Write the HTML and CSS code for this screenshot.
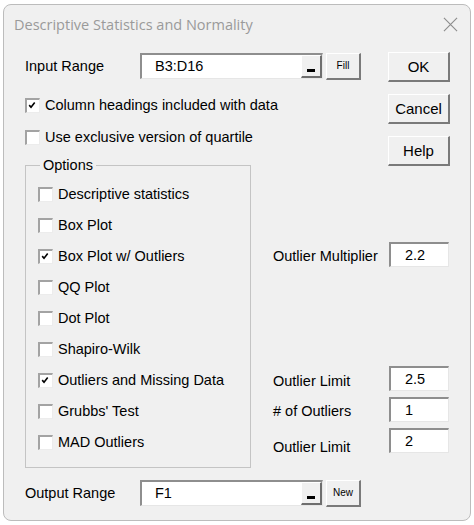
FILE: index.html
```html
<!DOCTYPE html>
<html>
<head>
<meta charset="utf-8">
<link rel="stylesheet" href="styles.css">
</head>
<body>
<div class="dialog">
  <div class="titlebar">
    <span class="title">Descriptive Statistics and Normality</span>
    <svg class="close" width="16" height="16" viewBox="0 0 16 16"><path d="M1 1 L15 15 M15 1 L1 15" stroke="#8c8c8c" stroke-width="1.2" fill="none"/></svg>
  </div>
  <div class="content">
    <div class="top">
      <div class="top-left">
        <div class="range-row">
          <span class="label">Input Range</span>
          <div class="refedit"><span class="val">B3:D16</span><span class="mini"><i></i></span></div>
          <button class="small-btn">Fill</button>
        </div>
        <label class="check top-check"><span class="box"><svg viewBox="0 0 15 15"><path d="M3 7 L5.5 10 L10.5 3.5" stroke="#000" stroke-width="2.2" fill="none"/></svg></span>Column headings included with data</label>
        <label class="check top-check"><span class="box"></span>Use exclusive version of quartile</label>
      </div>
      <div class="btns">
        <button class="btn">OK</button>
        <button class="btn">Cancel</button>
        <button class="btn">Help</button>
      </div>
    </div>
    <div class="lower">
      <fieldset class="group">
        <legend>Options</legend>
        <div class="opts">
          <label class="check"><span class="box"></span>Descriptive statistics</label>
          <label class="check"><span class="box"></span>Box Plot</label>
          <label class="check"><span class="box"><svg viewBox="0 0 15 15"><path d="M3 7 L5.5 10 L10.5 3.5" stroke="#000" stroke-width="2.2" fill="none"/></svg></span>Box Plot w/ Outliers</label>
          <label class="check"><span class="box"></span>QQ Plot</label>
          <label class="check"><span class="box"></span>Dot Plot</label>
          <label class="check"><span class="box"></span>Shapiro-Wilk</label>
          <label class="check"><span class="box"><svg viewBox="0 0 15 15"><path d="M3 7 L5.5 10 L10.5 3.5" stroke="#000" stroke-width="2.2" fill="none"/></svg></span>Outliers and Missing Data</label>
          <label class="check"><span class="box"></span>Grubbs' Test</label>
          <label class="check"><span class="box"></span>MAD Outliers</label>
        </div>
      </fieldset>
      <div class="fields">
        <div class="field r3"><span class="flabel">Outlier Multiplier</span><span class="num">2.2</span></div>
        <div class="field r7"><span class="flabel low">Outlier Limit</span><span class="num">2.5</span></div>
        <div class="field r8"><span class="flabel">#&nbsp;of Outliers</span><span class="num">1</span></div>
        <div class="field r9"><span class="flabel lower-l">Outlier Limit</span><span class="num">2</span></div>
      </div>
    </div>
    <div class="range-row out-row">
      <span class="label">Output Range</span>
      <div class="refedit"><span class="val">F1</span><span class="mini"><i></i></span></div>
      <button class="small-btn">New</button>
    </div>
  </div>
</div>
</body>
</html>
```
FILE: styles.css
```css
* { box-sizing: border-box; }
html, body { margin: 0; padding: 0; background: #ffffff; }
body {
  font-family: "Liberation Sans", Arial, sans-serif;
  font-size: 14.5px;
  color: #000;
}
.dialog {
  margin: 4px 3px 0 3px;
  width: 468px;
  height: 517px;
  border: 1px solid #bcbcbc;
  border-radius: 8px;
  background: #f0f0f0;
  overflow: hidden;
}
.titlebar {
  height: 38px;
  display: flex;
  align-items: center;
  justify-content: space-between;
  padding: 0 12px 0 10px;
}
.title {
  font-family: "Open Sans", "Noto Sans", sans-serif;
  font-size: 14.5px;
  color: #9a9a9a;
}
.close { width: 15px; height: 15px; }
.content { padding: 10px 0 0 21px; }
.top { display: flex; height: 103px; }
.top-left { width: 363px; }
.range-row { display: flex; align-items: center; height: 26px; }
.label { width: 115px; }
.refedit {
  width: 183px;
  height: 26px;
  display: flex;
  align-items: stretch;
  background: #fff;
  border-style: solid;
  border-width: 2px 1px 1px 2px;
  border-color: #8e8e8e #e6e6e6 #e6e6e6 #8e8e8e;
}
.val { flex: 1; padding-left: 13px; line-height: 22px; }
.mini {
  width: 21px;
  background: #f0f0f0;
  border-style: solid;
  border-width: 1px 2px 2px 1px;
  border-color: #fff #6e6e6e #6e6e6e #fff;
  display: flex;
  align-items: flex-end;
  justify-content: center;
  padding-bottom: 4px;
}
.mini i { display: block; width: 8px; height: 3px; background: #000; }
.small-btn {
  margin-left: 3px;
  width: 35px;
  height: 27px;
  padding: 0;
  background: #f0f0f0;
  border-style: solid;
  border-width: 1px 2px 2px 1px;
  border-color: #fff #7a7a7a #7a7a7a #fff;
  font-family: "Liberation Sans", Arial, sans-serif;
  font-size: 10px;
  color: #000;
}
.check { display: flex; align-items: center; height: 20px; }
.top-check { margin-top: 12px; }
.range-row + .top-check { margin-top: 16px; }
.box {
  width: 15px;
  height: 15px;
  margin-right: 5px;
  background: #fff;
  border-style: solid;
  border-width: 2px 1px 1px 2px;
  border-color: #a3a3a3 #ececec #ececec #a3a3a3;
  display: flex;
}
.box svg { width: 11px; height: 11px; }
.btns { display: flex; flex-direction: column; gap: 12px; margin-top: -1px; align-self: flex-start; }
.btn {
  width: 62px;
  height: 30px;
  padding: 0;
  background: #f0f0f0;
  border-style: solid;
  border-width: 1px 2px 2px 1px;
  border-color: #fff #7a7a7a #7a7a7a #fff;
  font-family: "Liberation Sans", Arial, sans-serif;
  font-size: 15px;
  color: #000;
}
.lower { display: flex; }
.group {
  margin: 0;
  padding: 0;
  width: 226px;
  border: 1px solid #c4c4c4;
  min-width: 0;
}
.group legend {
  margin-left: 14px;
  padding: 0 3px;
  line-height: 18px;
}
.opts {
  display: flex;
  flex-direction: column;
  gap: 11px;
  padding: 10px 0 15px 12px;
}
.fields {
  display: grid;
  grid-template-rows: repeat(9, 20px);
  row-gap: 11px;
  padding-top: 28px;
  margin-left: 22px;
  align-self: flex-start;
}
.field { display: flex; align-items: center; }
.r3 { grid-row: 3; }
.r7 { grid-row: 7; }
.r8 { grid-row: 8; }
.r9 { grid-row: 9; }
.flabel { width: 116px; }
.flabel.low { position: relative; top: 1px; }
.flabel.lower-l { position: relative; top: 5px; }
.num {
  width: 60px;
  height: 25px;
  margin-top: -3px;
  background: #fff;
  padding-left: 14px;
  line-height: 22px;
  border-style: solid;
  border-width: 2px 1px 1px 2px;
  border-color: #8e8e8e #e6e6e6 #e6e6e6 #8e8e8e;
}
.out-row { margin-top: 12px; }
```
